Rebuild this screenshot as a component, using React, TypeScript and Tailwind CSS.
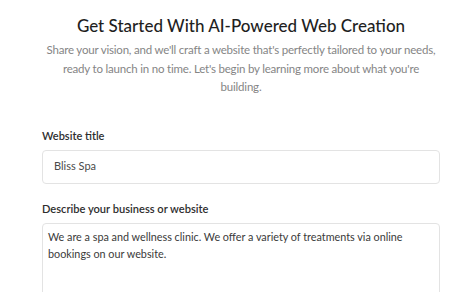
export default function App() {
  return (
    <div
      className="w-[474px] h-[292px] overflow-hidden bg-white pl-[42px] pr-[34px] pt-[14px]"
      style={{ fontFamily: 'Lato, "Open Sans", sans-serif' }}
    >
      <h1 className="text-center text-[17px] leading-[24px] font-medium text-[#1f1f1f]">
        Get Started With AI-Powered Web Creation
      </h1>
      <p className="mt-[3px] text-center text-[11.5px] leading-[18.5px] tracking-[-0.2px] text-[#858585]">
        Share your vision, and we'll craft a website that's perfectly tailored to your needs,
        ready to launch in no time. Let's begin by learning more about what you're building.
      </p>

      <label className="block mt-[30px] text-[11px] leading-[18px] font-semibold text-[#2e2e2e]">
        Website title
      </label>
      <div className="mt-[5px] h-[34px] rounded-[4px] border border-[#e3e3e3] flex items-center px-[11px] text-[11px] text-[#4a4a4a]">
        Bliss Spa
      </div>

      <label className="block mt-[16px] text-[11.1px] leading-[18px] font-semibold text-[#2e2e2e]">
        Describe your business or website
      </label>
      <div className="mt-[5px] h-[120px] rounded-[4px] border border-[#e3e3e3] px-[5px] pt-[4px] text-[10.8px] leading-[17px] text-[#3a3a3a]">
        We are a spa and wellness clinic. We offer a variety of treatments via online
        bookings on our website.
      </div>
    </div>
  );
}
